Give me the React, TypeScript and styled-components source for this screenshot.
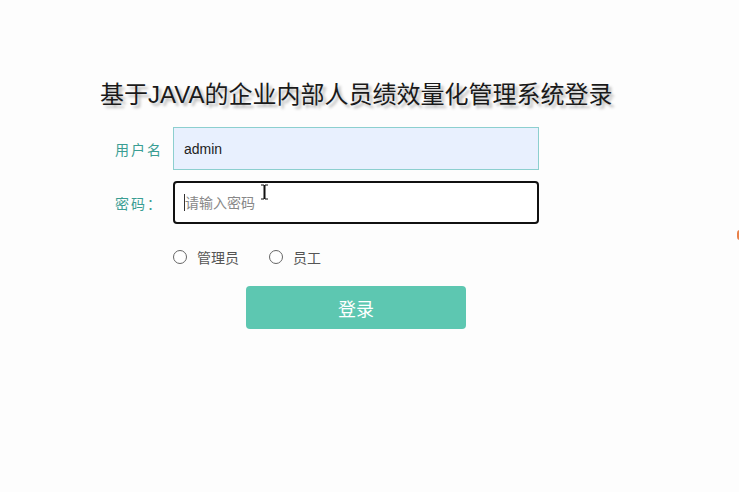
import React from "react";
import styled, { createGlobalStyle } from "styled-components";

const Global = createGlobalStyle`
  html, body { margin: 0; padding: 0; background: #fdfdfd; }
  body { font-family: "Noto Sans CJK SC", "Noto Sans", sans-serif; }
  * { box-sizing: border-box; }
`;

const Page = styled.div`
  position: relative;
  width: 739px;
  height: 492px;
  overflow: hidden;
  padding: 78px 0 0 100px;
`;

const Title = styled.h1`
  margin: 0 0 15px 0;
  font-size: 24px;
  font-weight: 400;
  line-height: 34px;
  color: #1a1a1a;
  letter-spacing: 0;
  text-shadow: 3px 3px 3px rgba(0, 0, 0, 0.28);
  font-family: "Liberation Sans", "Noto Sans CJK SC", sans-serif;
`;

const Form = styled.form`
  display: flex;
  flex-direction: column;
  gap: 11px;
`;

const Row = styled.div`
  display: flex;
  align-items: center;
`;

const Label = styled.label`
  width: 73px;
  padding-left: 15px;
  font-size: 14px;
  letter-spacing: 2px;
  color: #3a9d93;
`;

const Input = styled.input<{ $focused?: boolean; $filled?: boolean }>`
  width: 366px;
  height: 43px;
  padding: 0 10px;
  font-size: 14px;
  font-family: "Liberation Sans", "Noto Sans CJK SC", sans-serif;
  color: #222;
  outline: none;
  background: ${(p) => (p.$filled ? "#e8f0fe" : "#fff")};
  border: ${(p) => (p.$focused ? "2px solid #111" : "1px solid #8ccfcf")};
  border-radius: ${(p) => (p.$focused ? "4px" : "0")};
  &::placeholder { color: #888; font-size: 14px; font-family: "Noto Sans CJK SC", sans-serif; }
`;

const InputWrap = styled.div`
  position: relative;
`;

const Caret = styled.span`
  position: absolute;
  left: 11px;
  top: 13px;
  width: 1px;
  height: 17px;
  background: #333;
`;

const RadioRow = styled.div`
  display: flex;
  align-items: center;
  gap: 30px;
  margin: 23px 0 0 73px;
`;

const RadioLabel = styled.label`
  display: flex;
  align-items: center;
  gap: 10px;
  font-size: 14px;
  color: #555;
`;

const RadioCircle = styled.span`
  width: 14px;
  height: 14px;
  border: 1px solid #666;
  border-radius: 50%;
  background: #fff;
`;

const Button = styled.button`
  margin: 19px 0 0 146px;
  width: 220px;
  height: 43px;
  border: none;
  border-radius: 4px;
  background: #5dc7b1;
  color: #fff;
  font-size: 18px;
  font-family: "Noto Sans CJK SC", sans-serif;
`;

const Edge = styled.span`
  position: absolute;
  right: -4px;
  top: 230px;
  width: 6px;
  height: 10px;
  border-radius: 3px;
  background: #e8814a;
`;

const Cursor = styled.svg`
  position: absolute;
  left: 260px;
  top: 184px;
`;

export default function App() {
  return (
    <>
      <Global />
      <Page>
        <Title>基于JAVA的企业内部人员绩效量化管理系统登录</Title>
        <Form onSubmit={(e) => e.preventDefault()}>
          <Row>
            <Label>用户名</Label>
            <Input $filled defaultValue="admin" />
          </Row>
          <Row>
            <Label>密码：</Label>
            <InputWrap>
              <Input $focused type="password" placeholder="请输入密码" />
              <Caret />
            </InputWrap>
          </Row>
        </Form>
        <RadioRow>
          <RadioLabel>
            <RadioCircle />
            管理员
          </RadioLabel>
          <RadioLabel>
            <RadioCircle />
            员工
          </RadioLabel>
        </RadioRow>
        <Button type="button">登录</Button>
        <Edge />
        <Cursor width="9" height="16" viewBox="0 0 9 16">
          <path d="M1 1h3v14H1M8 1H5v14h3M4.5 1v14" fill="none" stroke="#111" strokeWidth="1" />
        </Cursor>
      </Page>
    </>
  );
}
